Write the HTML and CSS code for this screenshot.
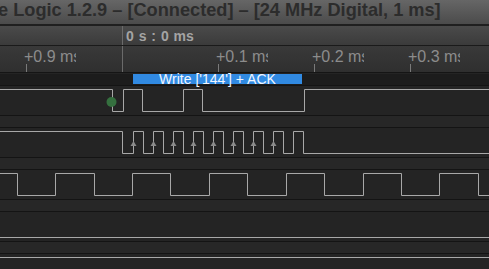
FILE: index.html
```html
<!DOCTYPE html>
<html lang="en">
<head>
    <meta charset="UTF-8">
    <title>Saleae Logic</title>
    <link rel="stylesheet" href="styles.css">
</head>
<body>

<div class="title-bar">
    <span class="title-text">e Logic 1.2.9 – [Connected] – [24 MHz Digital, 1 ms]</span>
</div>

<div class="time-header">
    <div class="zero-line"></div>
    <span class="trigger-time">0 s : 0 ms</span>
</div>

<div class="ruler">
    <div class="zero-line"></div>
    <div class="tick t1"><span>+0.9 ms</span></div>
    <div class="tick t2"><span>+0.1 ms</span></div>
    <div class="tick t3"><span>+0.2 ms</span></div>
    <div class="tick t4"><span>+0.3 ms</span></div>
</div>

<div class="decode-row">
    <div class="decode-box">Write ['144'] + ACK</div>
</div>

<!-- SDA -->
<div class="channel">
    <svg width="489" height="29">
        <path class="wave" d="M0 3.5 H112.5 V25.5 H123.5 V3.5 H142.5 V25.5 H183.5 V3.5 H202.5 V25.5 H304.5 V3.5 H489"/>
        <circle cx="111.5" cy="16" r="5" fill="#35703f"/>
    </svg>
</div>
<div class="spacer"></div>

<!-- SCL -->
<div class="channel">
    <svg width="489" height="29">
        <path class="wave" d="M0 3.5 H122.5 V25.5 H133.5 V3.5 H143.5 V25.5 H153.5 V3.5 H163.5 V25.5 H173.5 V3.5 H183.5 V25.5 H193.5 V3.5 H203.5 V25.5 H213.5 V3.5 H223.5 V25.5 H233.5 V3.5 H243.5 V25.5 H253.5 V3.5 H263.5 V25.5 H273.5 V3.5 H283.5 V25.5 H293.5 V3.5 H303.5 V25.5 H489"/>
        <g class="arrow">
            <path d="M133.5 13 l3 5 h-6 z"/>
            <path d="M153.5 13 l3 5 h-6 z"/>
            <path d="M173.5 13 l3 5 h-6 z"/>
            <path d="M193.5 13 l3 5 h-6 z"/>
            <path d="M213.5 13 l3 5 h-6 z"/>
            <path d="M233.5 13 l3 5 h-6 z"/>
            <path d="M253.5 13 l3 5 h-6 z"/>
            <path d="M273.5 13 l3 5 h-6 z"/>
        </g>
    </svg>
</div>
<div class="spacer"></div>

<!-- clock -->
<div class="channel">
    <svg width="489" height="29">
        <path class="wave" d="M0 3.5 H17.5 V25.5 H55.5 V3.5 H94.5 V25.5 H132.5 V3.5 H170.5 V25.5 H209.5 V3.5 H247.5 V25.5 H286.5 V3.5 H324.5 V25.5 H363.5 V3.5 H401.5 V25.5 H439.5 V3.5 H478.5 V25.5 H489"/>
    </svg>
</div>
<div class="spacer"></div>

<div class="channel">
    <svg width="489" height="29">
        <path class="wave" d="M0 25.5 H489"/>
    </svg>
</div>
<div class="spacer"></div>

<div class="channel">
    <svg width="489" height="29">
        <path class="wave" d="M0 3.5 H489"/>
    </svg>
</div>

</body>
</html>
```

FILE: styles.css
```css
html {
    overflow: hidden;
}
body {
    margin: 0;
    padding: 0;
    width: 489px;
    height: 269px;
    overflow: hidden;
    background-color: #242424;
    font-family: "Liberation Sans", Arial, sans-serif;
}
.title-bar {
    height: 24px;
    border-bottom: 2px solid #1f1f1f;
    background: linear-gradient(#666666, #4b4b4b);
    overflow: hidden;
    white-space: nowrap;
}
.title-text {
    display: block;
    margin-left: -2px;
    font-size: 18.2px;
    font-weight: bold;
    line-height: 20px;
    color: #2c2c2c;
}
.time-header {
    position: relative;
    height: 19px;
    border-bottom: 1px solid #1a1a1a;
    background: linear-gradient(#4a4a4a, #3b3b3b);
}
.trigger-time {
    display: block;
    padding-left: 126px;
    font-size: 14px;
    font-weight: bold;
    line-height: 20px;
    color: #a4a4a4;
    word-spacing: 1px;
}
.zero-line {
    position: absolute;
    left: 122px;
    top: 0;
    bottom: 0;
    width: 1px;
    background-color: #6a6a6a;
}
.ruler {
    position: relative;
    height: 26px;
    border-bottom: 1px solid #151515;
    background: linear-gradient(#393939, #2f2f2f);
}
.tick {
    position: absolute;
    top: 0;
    bottom: 0;
    width: 1px;
}
.tick::after {
    content: "";
    position: absolute;
    left: 0;
    bottom: 0;
    width: 1px;
    height: 8px;
    background-color: #7a7a7a;
}
.tick span {
    position: absolute;
    left: -2px;
    top: 2px;
    width: 52px;
    overflow: hidden;
    white-space: nowrap;
    font-size: 16px;
    line-height: 18px;
    color: #8c8c8c;
}
.t1 { left: 26px; }
.t2 { left: 218px; }
.t3 { left: 314px; }
.t4 { left: 410px; }
.decode-row {
    height: 11px;
    border-bottom: 1px solid #141414;
    background-color: #1c1c1c;
}
.decode-box {
    margin-left: 133px;
    margin-top: 1px;
    width: 169px;
    height: 10px;
    background-color: #318ae2;
    color: #f0f6ff;
    font-size: 14px;
    line-height: 10px;
    text-align: center;
    white-space: nowrap;
    overflow: visible;
}
.channel {
    height: 29px;
    border-bottom: 1px solid #141414;
    background-color: #242424;
}
.channel svg {
    display: block;
}
.spacer {
    height: 11px;
    border-bottom: 1px solid #141414;
    background-color: #272727;
}
.wave {
    fill: none;
    stroke: #a8a8a8;
    stroke-width: 1;
}
.arrow path {
    fill: #8a8a8a;
}
```
